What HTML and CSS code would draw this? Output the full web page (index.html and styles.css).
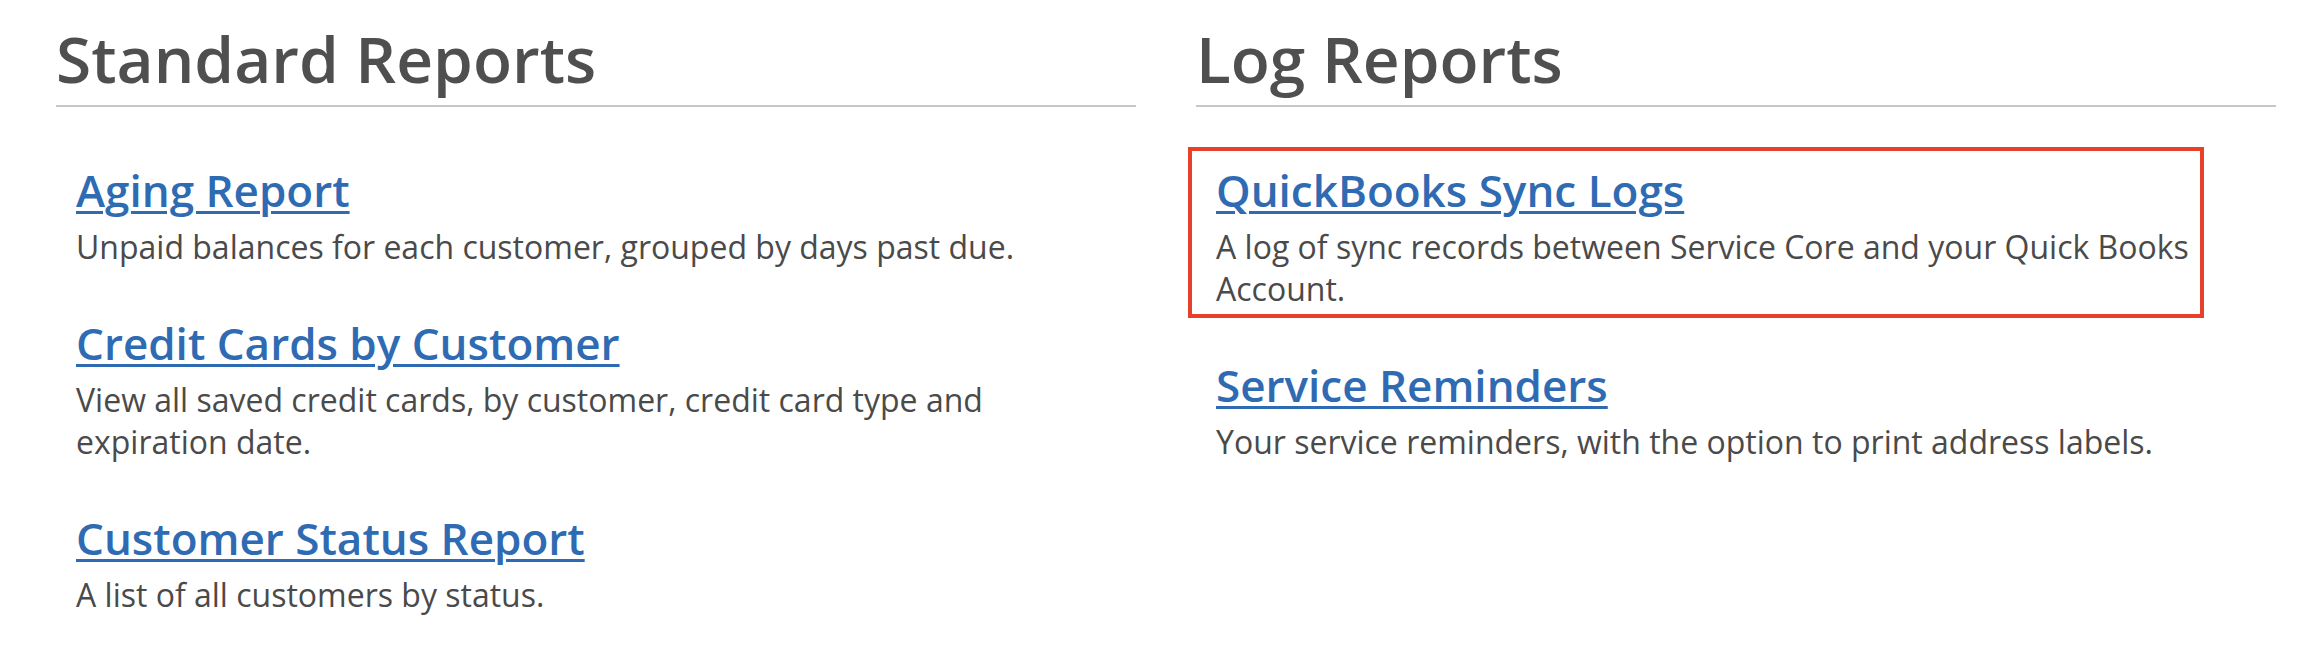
FILE: index.html
```html
<!DOCTYPE html>
<html lang="en">
<head>
<meta charset="utf-8">
<title>Reports</title>
<link rel="stylesheet" href="styles.css">
</head>
<body>
<main class="reports">
  <section class="report-group">
    <h2 class="report-group__title">Standard Reports</h2>
    <ul class="report-list">
      <li class="report-item">
        <a class="report-item__link" href="#">Aging Report</a>
        <p class="report-item__desc">Unpaid balances for each customer, grouped by days past due.</p>
      </li>
      <li class="report-item">
        <a class="report-item__link" href="#">Credit Cards by Customer</a>
        <p class="report-item__desc">View all saved credit cards, by customer, credit card type and expiration date.</p>
      </li>
      <li class="report-item">
        <a class="report-item__link" href="#">Customer Status Report</a>
        <p class="report-item__desc">A list of all customers by status.</p>
      </li>
    </ul>
  </section>
  <section class="report-group">
    <h2 class="report-group__title">Log Reports</h2>
    <ul class="report-list">
      <li class="report-item report-item--flagged">
        <a class="report-item__link" href="#">QuickBooks Sync Logs</a>
        <p class="report-item__desc">A log of sync records between Service Core and your Quick Books Account.</p>
      </li>
      <li class="report-item">
        <a class="report-item__link" href="#">Service Reminders</a>
        <p class="report-item__desc">Your service reminders, with the option to print address labels.</p>
      </li>
    </ul>
  </section>
</main>
</body>
</html>
```
FILE: styles.css
```css
html, body {
  margin: 0;
  padding: 0;
  background: #ffffff;
}

body {
  font-family: "Open Sans", "Noto Sans", "Liberation Sans", sans-serif;
  color: #4a4a4a;
}

.reports {
  display: grid;
  grid-template-columns: 1fr 1fr;
  column-gap: 60px;
  padding: 19px 40px 0 56px;
}

.report-group__title {
  margin: 0;
  font-size: 64px;
  font-weight: 600;
  line-height: 80px;
  color: #4f4f4f;
  padding-bottom: 6px;
  border-bottom: 2px solid #c6c6c6;
}

.report-list {
  list-style: none;
  margin: 0;
  padding: 57px 0 0 0;
  display: flex;
  flex-direction: column;
  gap: 49px;
}

.report-item {
  padding: 0 20px;
  display: flex;
  flex-direction: column;
  align-items: flex-start;
  gap: 10px;
}

.report-item--flagged {
  margin: -17px 72px -8px -8px;
  border: 4px solid #e8412a;
  padding: 13px 8px 4px 24px;
}

.report-item__link {
  font-size: 44px;
  line-height: 52px;
  font-weight: 600;
  color: #2f6bb3;
  text-decoration: underline;
  text-decoration-thickness: 3px;
  text-underline-offset: 4px;
}

.report-item__desc {
  margin: 0;
  font-size: 32px;
  line-height: 42px;
  color: #4a4a4a;
}
```
